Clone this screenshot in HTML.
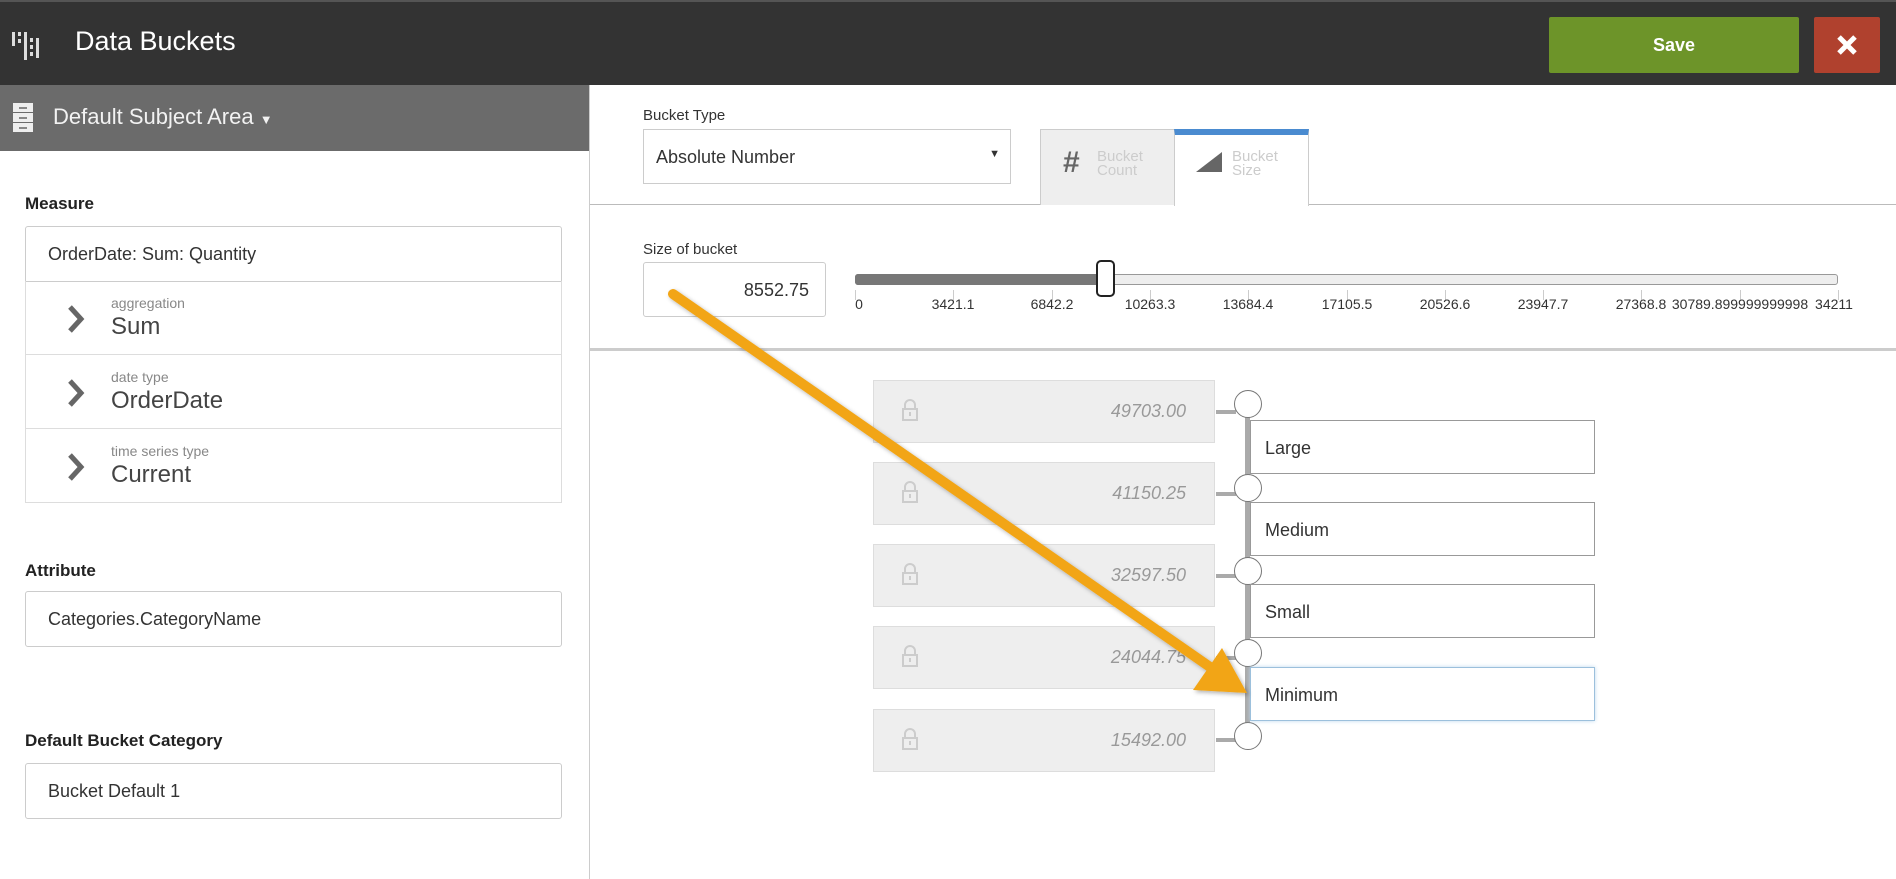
<!DOCTYPE html>
<html><head><meta charset="utf-8"><style>
*{box-sizing:border-box;margin:0;padding:0}
body{width:1896px;height:879px;position:relative;overflow:hidden;background:#fff;font-family:"Liberation Sans",Arial,sans-serif;color:#333}
.a{position:absolute}
.box{position:absolute;border:1px solid #ccc;background:#fff}
.lbl{position:absolute;font-size:17px;font-weight:bold;color:#222}
.tick{position:absolute;top:290px;width:1px;height:10px;background:#ccc}
.tl{position:absolute;top:296px;font-size:14px;color:#333;transform:translateX(-50%);white-space:nowrap}
.gb{position:absolute;left:873px;width:342px;height:63px;background:#eee;border:1px solid #ddd}
.gb span{position:absolute;right:28px;top:20px;font-style:italic;font-size:18px;color:#999}
.lock{position:absolute;left:28px;top:18px;width:16px;height:22px}
.circ{position:absolute;left:1234px;width:28px;height:28px;border:1px solid #777;border-radius:50%;background:#fff}
.stub{position:absolute;left:1216px;width:20px;height:4px;background:#aaa}
.nb{position:absolute;left:1250px;width:345px;height:54px;border:1px solid #999;background:#fff;font-size:18px;padding:17px 14px;color:#333}
.row{position:absolute;left:25px;width:537px;height:74px;border:1px solid #ddd;border-top:none}
.row .sm{position:absolute;left:85px;top:14px;font-size:14px;color:#888}
.row .bg{position:absolute;left:85px;top:32px;font-size:24px;color:#444}
.row svg{position:absolute;left:40px;top:22px}
</style></head><body>
<div class="a" style="left:0;top:0;width:1896px;height:85px;background:#333;border-top:2px solid #555"></div>
<svg class="a" style="left:11px;top:30px" width="32" height="32" viewBox="0 0 32 32" fill="#ddd">
<rect x="1" y="2" width="3" height="14"/><rect x="7" y="2" width="3" height="4"/><rect x="7" y="9" width="3" height="4"/><rect x="13" y="2" width="3" height="28"/><rect x="19" y="8" width="3" height="4"/><rect x="19" y="15" width="3" height="4"/><rect x="19" y="22" width="3" height="4"/><rect x="25" y="8" width="3" height="20"/></svg>
<div class="a" style="left:75px;top:26px;font-size:27px;color:#fff">Data Buckets</div>
<div class="a" style="left:1549px;top:17px;width:250px;height:56px;background:#6d9429;border-radius:2px;color:#fff;font-size:18px;font-weight:bold;text-align:center;line-height:56px">Save</div>
<div class="a" style="left:1814px;top:17px;width:66px;height:56px;background:#b0412e;border-radius:2px"></div>
<svg class="a" style="left:1836px;top:34px" width="22" height="22" viewBox="0 0 22 22"><path d="M3 3L19 19M19 3L3 19" stroke="#fff" stroke-width="5"/></svg>

<div class="a" style="left:0;top:85px;width:589px;height:66px;background:#6b6b6b"></div>
<svg class="a" style="left:13px;top:103px" width="20" height="30" viewBox="0 0 20 30"><rect x="0" y="0" width="20" height="9" fill="#eee"/><rect x="0" y="10" width="20" height="9" fill="#eee"/><rect x="0" y="20" width="20" height="9" fill="#eee"/><path d="M6 5h8M6 15h8M6 25h8" stroke="#666" stroke-width="1.5"/></svg>
<div class="a" style="left:53px;top:104px;font-size:22px;color:#f2f2f2">Default Subject Area <span style="font-size:13px">▼</span></div>
<div class="a" style="left:589px;top:85px;width:1px;height:794px;background:#ccc"></div>

<div class="lbl" style="left:25px;top:194px">Measure</div>
<div class="box" style="left:25px;top:226px;width:537px;height:56px;border-radius:3px 3px 0 0;font-size:18px;padding:17px 22px">OrderDate: Sum: Quantity</div>
<div class="row" style="top:281px"><svg width="20" height="32" viewBox="0 0 20 32"><path d="M4 4L15 16L4 28" stroke="#666" stroke-width="5" fill="none"/></svg><div class="sm">aggregation</div><div class="bg">Sum</div></div>
<div class="row" style="top:355px"><svg width="20" height="32" viewBox="0 0 20 32"><path d="M4 4L15 16L4 28" stroke="#666" stroke-width="5" fill="none"/></svg><div class="sm">date type</div><div class="bg">OrderDate</div></div>
<div class="row" style="top:429px"><svg width="20" height="32" viewBox="0 0 20 32"><path d="M4 4L15 16L4 28" stroke="#666" stroke-width="5" fill="none"/></svg><div class="sm">time series type</div><div class="bg">Current</div></div>

<div class="lbl" style="left:25px;top:561px">Attribute</div>
<div class="box" style="left:25px;top:591px;width:537px;height:56px;font-size:18px;padding:17px 22px;border-radius:3px">Categories.CategoryName</div>
<div class="lbl" style="left:25px;top:731px">Default Bucket Category</div>
<div class="box" style="left:25px;top:763px;width:537px;height:56px;font-size:18px;padding:17px 22px;border-radius:3px">Bucket Default 1</div>

<div class="a" style="left:643px;top:107px;font-size:15px">Bucket Type</div>
<div class="box" style="left:643px;top:129px;width:368px;height:55px;font-size:18px;padding:17px 12px">Absolute Number<span style="position:absolute;right:10px;top:18px;font-size:11px">▼</span></div>
<div class="a" style="left:590px;top:204px;width:1306px;height:1px;background:#bbb"></div>
<div class="a" style="left:1040px;top:129px;width:135px;height:76px;background:#eee;border:1px solid #ccc;border-bottom:none"></div>
<div class="a" style="left:1063px;top:146px;font-size:30px;font-weight:bold;color:#666">#</div>
<div class="a" style="left:1097px;top:150px;font-size:15px;color:#ccc;line-height:14px">Bucket<br>Count</div>
<div class="a" style="left:1174px;top:129px;width:135px;height:77px;background:#fff;border:1px solid #ccc;border-bottom:none;border-top:6px solid #4a8bd0"></div>
<svg class="a" style="left:1196px;top:152px" width="26" height="20"><path d="M0 20L26 0V20Z" fill="#666"/></svg>
<div class="a" style="left:1232px;top:150px;font-size:15px;color:#ccc;line-height:14px">Bucket<br>Size</div>

<div class="a" style="left:643px;top:241px;font-size:15px">Size of bucket</div>
<div class="box" style="left:643px;top:262px;width:183px;height:55px;font-size:18px;text-align:right;padding:17px 16px;border-radius:3px">8552.75</div>
<div class="a" style="left:855px;top:274px;width:983px;height:11px;background:#eee;border:1px solid #999;border-radius:3px"></div>
<div class="a" style="left:855px;top:274px;width:250px;height:11px;background:#777;border-radius:3px 0 0 3px"></div>
<div class="a" style="left:1096px;top:260px;width:19px;height:37px;background:#fff;border:2px solid #222;border-radius:5px"></div>
<div class="tick" style="left:855px"></div><div class="tick" style="left:953px"></div><div class="tick" style="left:1052px"></div><div class="tick" style="left:1150px"></div><div class="tick" style="left:1248px"></div><div class="tick" style="left:1347px"></div><div class="tick" style="left:1445px"></div><div class="tick" style="left:1543px"></div><div class="tick" style="left:1641px"></div><div class="tick" style="left:1740px"></div><div class="tick" style="left:1838px"></div>
<div class="tl" style="left:859px">0</div><div class="tl" style="left:953px">3421.1</div><div class="tl" style="left:1052px">6842.2</div><div class="tl" style="left:1150px">10263.3</div><div class="tl" style="left:1248px">13684.4</div><div class="tl" style="left:1347px">17105.5</div><div class="tl" style="left:1445px">20526.6</div><div class="tl" style="left:1543px">23947.7</div><div class="tl" style="left:1641px">27368.8</div><div class="tl" style="left:1740px">30789.899999999998</div><div class="tl" style="left:1834px">34211</div>
<div class="a" style="left:590px;top:348px;width:1306px;height:3px;background:#ccc"></div>

<div class="a" style="left:1245px;top:404px;width:5px;height:332px;background:#aaa"></div>
<div class="gb" style="top:380px"><svg class="lock" viewBox="0 0 16 22"><path d="M3 10V6a5 5 0 0110 0v4" stroke="#ccc" stroke-width="2" fill="none"/><rect x="1" y="10" width="14" height="11" fill="none" stroke="#ccc" stroke-width="2"/><rect x="7" y="13" width="2" height="4" fill="#ccc"/></svg><span>49703.00</span></div>
<div class="gb" style="top:462px"><svg class="lock" viewBox="0 0 16 22"><path d="M3 10V6a5 5 0 0110 0v4" stroke="#ccc" stroke-width="2" fill="none"/><rect x="1" y="10" width="14" height="11" fill="none" stroke="#ccc" stroke-width="2"/><rect x="7" y="13" width="2" height="4" fill="#ccc"/></svg><span>41150.25</span></div>
<div class="gb" style="top:544px"><svg class="lock" viewBox="0 0 16 22"><path d="M3 10V6a5 5 0 0110 0v4" stroke="#ccc" stroke-width="2" fill="none"/><rect x="1" y="10" width="14" height="11" fill="none" stroke="#ccc" stroke-width="2"/><rect x="7" y="13" width="2" height="4" fill="#ccc"/></svg><span>32597.50</span></div>
<div class="gb" style="top:626px"><svg class="lock" viewBox="0 0 16 22"><path d="M3 10V6a5 5 0 0110 0v4" stroke="#ccc" stroke-width="2" fill="none"/><rect x="1" y="10" width="14" height="11" fill="none" stroke="#ccc" stroke-width="2"/><rect x="7" y="13" width="2" height="4" fill="#ccc"/></svg><span>24044.75</span></div>
<div class="gb" style="top:709px"><svg class="lock" viewBox="0 0 16 22"><path d="M3 10V6a5 5 0 0110 0v4" stroke="#ccc" stroke-width="2" fill="none"/><rect x="1" y="10" width="14" height="11" fill="none" stroke="#ccc" stroke-width="2"/><rect x="7" y="13" width="2" height="4" fill="#ccc"/></svg><span>15492.00</span></div>
<div class="stub" style="top:410px"></div><div class="stub" style="top:492px"></div><div class="stub" style="top:574px"></div><div class="stub" style="top:656px"></div><div class="stub" style="top:738px"></div>
<div class="circ" style="top:390px"></div><div class="circ" style="top:474px"></div><div class="circ" style="top:557px"></div><div class="circ" style="top:639px"></div><div class="circ" style="top:722px"></div>
<div class="nb" style="top:420px">Large</div>
<div class="nb" style="top:502px">Medium</div>
<div class="nb" style="top:584px">Small</div>
<div class="nb" style="top:667px;border-color:#9cc0dc;box-shadow:0 0 4px #bcd8ee">Minimum</div>

<svg class="a" style="left:0;top:0" width="1896" height="879"><defs><filter id="s"><feDropShadow dx="2" dy="2" stdDeviation="2" flood-opacity="0.3"/></filter></defs>
<g filter="url(#s)"><path d="M673 294L1210 667" stroke="#f2a516" stroke-width="10" stroke-linecap="round"/><path d="M1247 693L1193 690L1222 648Z" fill="#f2a516"/></g></svg>
</body></html>
